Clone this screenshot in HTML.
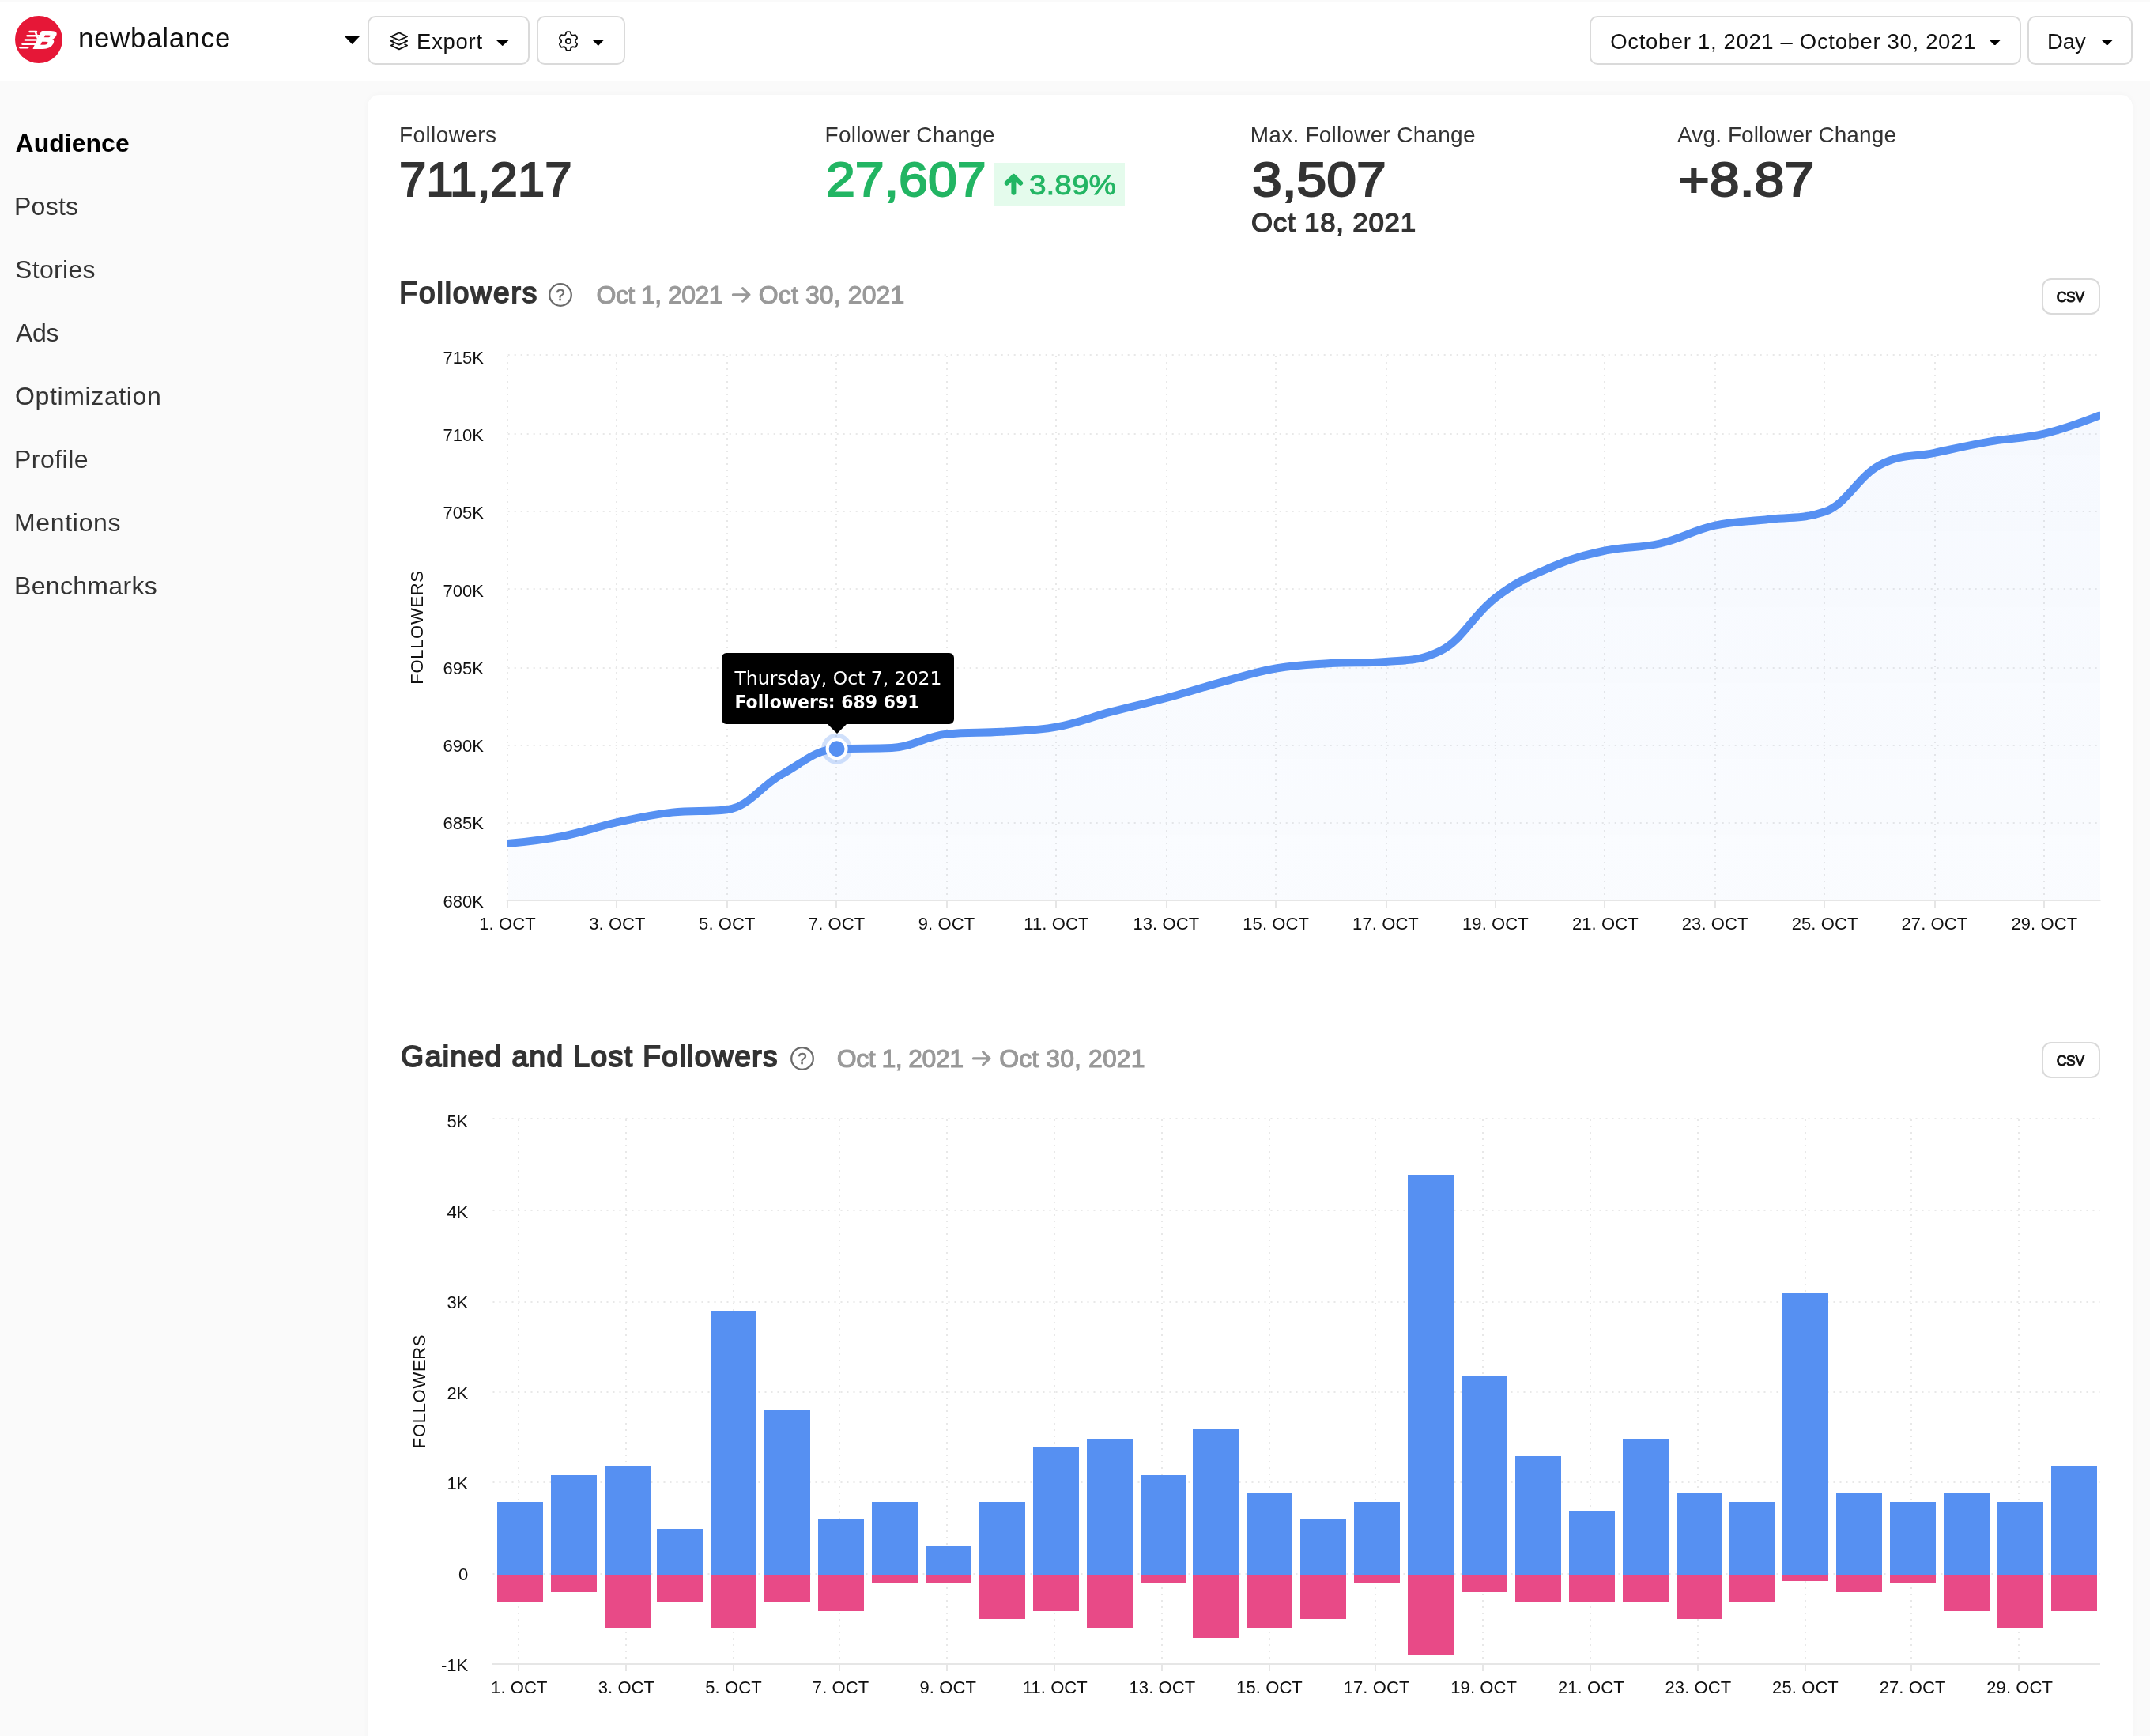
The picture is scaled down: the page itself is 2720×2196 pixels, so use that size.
<!DOCTYPE html>
<html lang="en"><head><meta charset="utf-8"><title>newbalance – Audience</title>
<style>
html,body{margin:0;padding:0}
body{width:2720px;height:2196px;overflow:hidden;background:#fafafa;font-family:"Liberation Sans", Arial, Helvetica, sans-serif;position:relative}
#layer{position:absolute;left:0;top:0;width:2720px;height:2196px;will-change:transform}
.abs{position:absolute}
.t{position:absolute;white-space:nowrap}
.hdr{position:absolute;left:0;top:0;width:2720px;height:102px;background:#fff;box-sizing:border-box;border-top:2px solid #fafafa}
.card{position:absolute;left:465px;top:120px;width:2233px;height:2200px;background:#fff;border-radius:15px;box-shadow:0 0 8px rgba(0,0,0,0.03)}
.btn{position:absolute;box-sizing:border-box;border:2px solid #dadada;border-radius:10px;background:#fff}
svg text.al{font-family:"Liberation Sans", Arial, Helvetica, sans-serif;font-size:22px;fill:#111}
svg text.tt{font-family:"DejaVu Sans", "Liberation Sans", sans-serif;font-size:23.5px;fill:#fff}
svg text.xl{letter-spacing:0.1px}
svg .g{stroke:#e8e8e8;stroke-width:2;stroke-dasharray:2 6}
</style></head><body>
<div class="hdr"></div>
<div class="card"></div>
<div id="layer">

<header>
<svg class="abs" style="left:19px;top:20px" width="60" height="60" viewBox="0 0 60 60">
<circle cx="30" cy="30" r="30" fill="#e61737"/>
<text transform="translate(21.8 40.8) skewX(-26) scale(1.1 1)" font-family='"Liberation Sans", Arial, sans-serif' font-size="30.5" font-weight="bold" fill="#fff" stroke="#fff" stroke-width="2.2" stroke-linejoin="round">B</text>
<g stroke="#fff" stroke-width="2.5" stroke-linecap="round">
<line x1="18.5" y1="19.9" x2="27" y2="19.9"/><line x1="15.5" y1="25.2" x2="34" y2="25.2"/><line x1="12.8" y1="30.5" x2="33" y2="30.5"/><line x1="9.5" y1="35.7" x2="30" y2="35.7"/><line x1="6.5" y1="40.3" x2="16" y2="40.3"/><line x1="26" y1="21" x2="31" y2="34"/>
</g></svg>
<div class="t" style="left:98.90px;top:30px;font-size:35px;line-height:35px;color:#111;letter-spacing:0.651px;">newbalance</div>
<svg class="abs" style="left:435.5px;top:45.8px" width="19" height="10" viewBox="0 0 19 10"><path d="M0 0 H19 L9.5 10 Z" fill="#000"/></svg>
<div class="btn" style="left:465px;top:20px;width:205px;height:62px"></div>
<svg class="abs" style="left:492px;top:39px" width="26" height="26" viewBox="0 0 26 26" fill="none" stroke="#111" stroke-width="1.75" stroke-linejoin="round" stroke-linecap="round">
<path d="M12.9 2.4 L23.1 7.2 L12.9 11.9 L2.7 7.2 Z"/><path d="M5.6 11.5 L2.7 12.9 L12.9 17.6 L23.1 12.9 L20.2 11.5"/><path d="M5.6 17.1 L2.7 18.5 L12.9 23.4 L23.1 18.5 L20.2 17.1"/></svg>
<div class="t" style="left:527.10px;top:39px;font-size:27.5px;line-height:27.5px;color:#111;letter-spacing:0.712px;">Export</div>
<svg class="abs" style="left:627.1px;top:50px" width="17.5" height="8.2" viewBox="0 0 17.5 8.2"><path d="M0 0 H17.5 L8.75 8.2 Z" fill="#000"/></svg>
<div class="btn" style="left:679px;top:20px;width:112px;height:62px"></div>
<svg class="abs" style="left:704.9px;top:37.9px" width="28" height="28" viewBox="0 0 28 28" fill="none" stroke="#111" stroke-width="1.8" stroke-linejoin="round">
<path d="M11.21 3.33 Q11.48 2.16 12.68 2.16 L15.32 2.16 Q16.52 2.16 16.79 3.33 L17.09 4.59 Q17.36 5.76 18.40 6.36 L18.42 6.37 Q19.45 6.97 20.60 6.62 L21.84 6.25 Q22.99 5.90 23.59 6.94 L24.91 9.22 Q25.51 10.26 24.63 11.08 L23.69 11.97 Q22.82 12.79 22.82 13.99 L22.82 14.01 Q22.82 15.21 23.69 16.03 L24.63 16.92 Q25.51 17.74 24.91 18.78 L23.59 21.06 Q22.99 22.10 21.84 21.75 L20.60 21.38 Q19.45 21.03 18.42 21.63 L18.40 21.64 Q17.36 22.24 17.09 23.41 L16.79 24.67 Q16.52 25.84 15.32 25.84 L12.68 25.84 Q11.48 25.84 11.21 24.67 L10.91 23.41 Q10.64 22.24 9.60 21.64 L9.58 21.63 Q8.55 21.03 7.40 21.38 L6.16 21.75 Q5.01 22.10 4.41 21.06 L3.09 18.78 Q2.49 17.74 3.37 16.92 L4.31 16.03 Q5.18 15.21 5.18 14.01 L5.18 13.99 Q5.18 12.79 4.31 11.97 L3.37 11.08 Q2.49 10.26 3.09 9.22 L4.41 6.94 Q5.01 5.90 6.16 6.25 L7.40 6.62 Q8.55 6.97 9.58 6.37 L9.60 6.36 Q10.64 5.76 10.91 4.59 Z"/><circle cx="14" cy="14" r="3.2"/></svg>
<svg class="abs" style="left:749.1px;top:49.9px" width="15.6" height="8" viewBox="0 0 15.6 8"><path d="M0 0 H15.6 L7.8 8 Z" fill="#000"/></svg>
<div class="btn" style="left:2011px;top:20px;width:546px;height:62px"></div>
<div class="t" style="left:2037.20px;top:39px;font-size:27.5px;line-height:27.5px;color:#111;letter-spacing:0.661px;">October 1, 2021 – October 30, 2021</div>
<svg class="abs" style="left:2515.5px;top:49.5px" width="15.5" height="7.8" viewBox="0 0 15.5 7.8"><path d="M0 0 H15.5 L7.75 7.8 Z" fill="#000"/></svg>
<div class="btn" style="left:2565px;top:20px;width:133px;height:62px"></div>
<div class="t" style="left:2590.10px;top:39px;font-size:27.5px;line-height:27.5px;color:#111;letter-spacing:-0.127px;">Day</div>
<svg class="abs" style="left:2657.5px;top:49.5px" width="15.5" height="7.8" viewBox="0 0 15.5 7.8"><path d="M0 0 H15.5 L7.75 7.8 Z" fill="#000"/></svg>
</header>
<nav>
<div class="t" style="left:19.60px;top:165px;font-size:32px;line-height:32px;color:#000;font-weight:bold;letter-spacing:0.009px;">Audience</div>
<div class="t" style="left:18.00px;top:245px;font-size:32px;line-height:32px;color:#333;letter-spacing:0.267px;">Posts</div>
<div class="t" style="left:19.00px;top:325px;font-size:32px;line-height:32px;color:#333;letter-spacing:0.334px;">Stories</div>
<div class="t" style="left:20.00px;top:405px;font-size:32px;line-height:32px;color:#333;letter-spacing:-0.370px;">Ads</div>
<div class="t" style="left:19.00px;top:485px;font-size:32px;line-height:32px;color:#333;letter-spacing:0.632px;">Optimization</div>
<div class="t" style="left:18.00px;top:565px;font-size:32px;line-height:32px;color:#333;letter-spacing:0.466px;">Profile</div>
<div class="t" style="left:18.00px;top:645px;font-size:32px;line-height:32px;color:#333;letter-spacing:0.679px;">Mentions</div>
<div class="t" style="left:18.00px;top:725px;font-size:32px;line-height:32px;color:#333;letter-spacing:0.328px;">Benchmarks</div>
</nav>
<main>
<div class="t" style="left:505.10px;top:157px;font-size:28px;line-height:28px;color:#333;letter-spacing:0.374px;">Followers</div>
<div class="t" style="left:1043.60px;top:157px;font-size:28px;line-height:28px;color:#333;letter-spacing:0.243px;">Follower Change</div>
<div class="t" style="left:1581.80px;top:157px;font-size:28px;line-height:28px;color:#333;letter-spacing:0.239px;">Max. Follower Change</div>
<div class="t" style="left:2122.10px;top:157px;font-size:28px;line-height:28px;color:#333;letter-spacing:0.100px;">Avg. Follower Change</div>
<div class="t" style="left:505.06px;top:197px;font-size:61px;line-height:61px;color:#333;-webkit-text-stroke:2.0px #333;transform:scaleX(1.0117);transform-origin:0 0;">711,217</div>
<div class="t" style="left:1044.84px;top:197px;font-size:61px;line-height:61px;color:#22b563;-webkit-text-stroke:2.0px #22b563;transform:scaleX(1.0861);transform-origin:0 0;">27,607</div>
<div class="t" style="left:1583.88px;top:197px;font-size:61px;line-height:61px;color:#333;-webkit-text-stroke:2.0px #333;transform:scaleX(1.1122);transform-origin:0 0;">3,507</div>
<div class="t" style="left:2123.37px;top:197px;font-size:61px;line-height:61px;color:#333;-webkit-text-stroke:2.0px #333;transform:scaleX(1.1163);transform-origin:0 0;">+8.87</div>
<div class="abs" style="left:1257px;top:206px;width:166px;height:54px;background:#e4fbec"></div>
<div class="t" style="left:1302.31px;top:217px;font-size:35.5px;line-height:35.5px;color:#22b563;-webkit-text-stroke:0.8px #22b563;transform:scaleX(1.0919);transform-origin:0 0;">3.89%</div>
<svg class="abs" style="left:1268px;top:217px" width="30" height="32" viewBox="0 0 30 32" fill="none" stroke="#22b563" stroke-width="6" stroke-linecap="round" stroke-linejoin="round"><path d="M14.4 26.7 V6.2 M5.7 14.7 L14.4 6 L23.1 14.7"/></svg>
<div class="t" style="left:1583.38px;top:266px;font-size:32.5px;line-height:32.5px;color:#333;letter-spacing:0.764px;-webkit-text-stroke:1.3px #333;transform:scaleX(1.0700);transform-origin:0 0;">Oct 18, 2021</div>
<div class="t" style="left:505.35px;top:352px;font-size:37px;line-height:37px;color:#333;letter-spacing:1.961px;-webkit-text-stroke:1.9px #333;">Followers</div>
<svg class="abs" style="left:692px;top:355.6px" width="34" height="34" viewBox="0 0 34 34"><circle cx="17" cy="17" r="13.8" fill="none" stroke="#6b6b6b" stroke-width="2.3"/><text x="17" y="24.2" text-anchor="middle" font-family='"Liberation Sans", Arial, Helvetica, sans-serif' font-size="20.5" fill="#6b6b6b" stroke="#6b6b6b" stroke-width="0.5">?</text></svg>
<div class="t" style="left:754.55px;top:357px;font-size:32px;line-height:32px;color:#999;letter-spacing:-0.534px;-webkit-text-stroke:1.1px #999;">Oct 1, 2021</div>
<svg class="abs" style="left:924.0px;top:361.8px" width="28" height="22" viewBox="0 0 28 22" fill="none" stroke="#999" stroke-width="3.1" stroke-linecap="round" stroke-linejoin="round"><path d="M3.4 10.9 H23.4 M15.6 2.7 L24 10.9 L15.6 19.1"/></svg>
<div class="t" style="left:959.85px;top:357px;font-size:32px;line-height:32px;color:#999;letter-spacing:0.106px;-webkit-text-stroke:1.1px #999;">Oct 30, 2021</div>
<div class="btn" style="left:2583px;top:352px;width:74px;height:46px;border-radius:12px"></div><div class="t" style="left:2601.65px;top:368px;font-size:17.5px;line-height:17.5px;color:#111;letter-spacing:-0.205px;-webkit-text-stroke:0.9px #111;">CSV</div>
<div class="t" style="left:507.35px;top:1318px;font-size:37px;line-height:37px;color:#333;letter-spacing:1.503px;-webkit-text-stroke:1.9px #333;">Gained and Lost Followers</div>
<svg class="abs" style="left:998px;top:1321.6px" width="34" height="34" viewBox="0 0 34 34"><circle cx="17" cy="17" r="13.8" fill="none" stroke="#6b6b6b" stroke-width="2.3"/><text x="17" y="24.2" text-anchor="middle" font-family='"Liberation Sans", Arial, Helvetica, sans-serif' font-size="20.5" fill="#6b6b6b" stroke="#6b6b6b" stroke-width="0.5">?</text></svg>
<div class="t" style="left:1058.85px;top:1323px;font-size:32px;line-height:32px;color:#999;letter-spacing:-0.534px;-webkit-text-stroke:1.1px #999;">Oct 1, 2021</div>
<svg class="abs" style="left:1228.3px;top:1327.8px" width="28" height="22" viewBox="0 0 28 22" fill="none" stroke="#999" stroke-width="3.1" stroke-linecap="round" stroke-linejoin="round"><path d="M3.4 10.9 H23.4 M15.6 2.7 L24 10.9 L15.6 19.1"/></svg>
<div class="t" style="left:1264.15px;top:1323px;font-size:32px;line-height:32px;color:#999;letter-spacing:0.106px;-webkit-text-stroke:1.1px #999;">Oct 30, 2021</div>
<div class="btn" style="left:2583px;top:1318px;width:74px;height:46px;border-radius:12px"></div><div class="t" style="left:2601.65px;top:1334px;font-size:17.5px;line-height:17.5px;color:#111;letter-spacing:-0.205px;-webkit-text-stroke:0.9px #111;">CSV</div>
<svg class="abs" style="left:0;top:0" width="2720" height="2196" viewBox="0 0 2720 2196">
<defs><clipPath id="lc"><rect x="642.0" y="439.0" width="2015.0" height="701.25"/></clipPath><linearGradient id="ag" x1="0" y1="0" x2="0" y2="1" gradientUnits="objectBoundingBox"><stop offset="0" stop-color="#5690f2" stop-opacity="0.055"/><stop offset="1" stop-color="#5690f2" stop-opacity="0.03"/></linearGradient></defs>
<line x1="642.7" x2="2656.5" y1="449" y2="449" class="g"/>
<line x1="642.7" x2="2656.5" y1="549" y2="549" class="g"/>
<line x1="642.7" x2="2656.5" y1="647" y2="647" class="g"/>
<line x1="642.7" x2="2656.5" y1="745" y2="745" class="g"/>
<line x1="642.7" x2="2656.5" y1="845" y2="845" class="g"/>
<line x1="642.7" x2="2656.5" y1="943" y2="943" class="g"/>
<line x1="642.7" x2="2656.5" y1="1041" y2="1041" class="g"/>
<line x1="642" x2="642" y1="450.0" y2="1138.0" class="g"/>
<line x1="780" x2="780" y1="450.0" y2="1138.0" class="g"/>
<line x1="920" x2="920" y1="450.0" y2="1138.0" class="g"/>
<line x1="1058" x2="1058" y1="450.0" y2="1138.0" class="g"/>
<line x1="1198" x2="1198" y1="450.0" y2="1138.0" class="g"/>
<line x1="1336" x2="1336" y1="450.0" y2="1138.0" class="g"/>
<line x1="1476" x2="1476" y1="450.0" y2="1138.0" class="g"/>
<line x1="1614" x2="1614" y1="450.0" y2="1138.0" class="g"/>
<line x1="1754" x2="1754" y1="450.0" y2="1138.0" class="g"/>
<line x1="1892" x2="1892" y1="450.0" y2="1138.0" class="g"/>
<line x1="2030" x2="2030" y1="450.0" y2="1138.0" class="g"/>
<line x1="2170" x2="2170" y1="450.0" y2="1138.0" class="g"/>
<line x1="2308" x2="2308" y1="450.0" y2="1138.0" class="g"/>
<line x1="2448" x2="2448" y1="450.0" y2="1138.0" class="g"/>
<line x1="2586" x2="2586" y1="450.0" y2="1138.0" class="g"/>
<path d="M 642.00 1067.10 C 642.00 1067.10 683.66 1063.18 711.44 1057.80 C 739.22 1052.42 753.10 1046.24 780.88 1040.20 C 808.66 1034.16 822.54 1030.80 850.32 1027.60 C 878.10 1024.40 891.98 1027.60 919.76 1024.20 C 947.54 1020.80 961.42 994.88 989.20 979.50 C 1016.98 964.12 1030.86 948.60 1058.64 947.30 C 1086.42 946.00 1100.30 947.30 1128.08 946.00 C 1155.86 944.70 1169.74 931.50 1197.52 928.60 C 1225.30 925.70 1239.18 927.48 1266.96 925.70 C 1294.74 923.92 1308.62 924.76 1336.40 919.70 C 1364.18 914.64 1378.06 907.74 1405.84 900.40 C 1433.62 893.06 1447.50 890.46 1475.28 883.00 C 1503.06 875.54 1516.94 870.60 1544.72 863.10 C 1572.50 855.60 1586.38 850.30 1614.16 845.50 C 1641.94 840.70 1655.82 840.82 1683.60 839.10 C 1711.38 837.38 1725.26 839.10 1753.04 836.90 C 1780.82 834.70 1794.70 836.90 1822.48 823.30 C 1850.26 809.70 1864.14 777.28 1891.92 756.20 C 1919.70 735.12 1933.58 729.84 1961.36 717.90 C 1989.14 705.96 2003.02 702.58 2030.80 696.50 C 2058.58 690.42 2072.46 693.86 2100.24 687.50 C 2128.02 681.14 2141.90 670.84 2169.68 664.70 C 2197.46 658.56 2211.34 660.28 2239.12 656.80 C 2266.90 653.32 2280.78 656.80 2308.56 647.30 C 2336.34 637.80 2350.22 603.28 2378.00 588.40 C 2405.78 573.52 2419.66 578.86 2447.44 572.90 C 2475.22 566.94 2489.10 563.46 2516.88 558.60 C 2544.66 553.74 2558.54 555.18 2586.32 548.60 C 2614.10 542.02 2655.76 525.70 2655.76 525.70 L 2657.0 525.70 L 2657.0 1138 L 642.70 1138 L 642.70 1067.10 Z" fill="url(#ag)"/>
<line x1="640.7" x2="2657.5" y1="1139" y2="1139" stroke="#e6e6e6" stroke-width="2"/>
<line x1="642" x2="642" y1="1139" y2="1148" stroke="#e6e6e6" stroke-width="2"/>
<line x1="780" x2="780" y1="1139" y2="1148" stroke="#e6e6e6" stroke-width="2"/>
<line x1="920" x2="920" y1="1139" y2="1148" stroke="#e6e6e6" stroke-width="2"/>
<line x1="1058" x2="1058" y1="1139" y2="1148" stroke="#e6e6e6" stroke-width="2"/>
<line x1="1198" x2="1198" y1="1139" y2="1148" stroke="#e6e6e6" stroke-width="2"/>
<line x1="1336" x2="1336" y1="1139" y2="1148" stroke="#e6e6e6" stroke-width="2"/>
<line x1="1476" x2="1476" y1="1139" y2="1148" stroke="#e6e6e6" stroke-width="2"/>
<line x1="1614" x2="1614" y1="1139" y2="1148" stroke="#e6e6e6" stroke-width="2"/>
<line x1="1754" x2="1754" y1="1139" y2="1148" stroke="#e6e6e6" stroke-width="2"/>
<line x1="1892" x2="1892" y1="1139" y2="1148" stroke="#e6e6e6" stroke-width="2"/>
<line x1="2030" x2="2030" y1="1139" y2="1148" stroke="#e6e6e6" stroke-width="2"/>
<line x1="2170" x2="2170" y1="1139" y2="1148" stroke="#e6e6e6" stroke-width="2"/>
<line x1="2308" x2="2308" y1="1139" y2="1148" stroke="#e6e6e6" stroke-width="2"/>
<line x1="2448" x2="2448" y1="1139" y2="1148" stroke="#e6e6e6" stroke-width="2"/>
<line x1="2586" x2="2586" y1="1139" y2="1148" stroke="#e6e6e6" stroke-width="2"/>
<path d="M 642.00 1067.10 C 642.00 1067.10 683.66 1063.18 711.44 1057.80 C 739.22 1052.42 753.10 1046.24 780.88 1040.20 C 808.66 1034.16 822.54 1030.80 850.32 1027.60 C 878.10 1024.40 891.98 1027.60 919.76 1024.20 C 947.54 1020.80 961.42 994.88 989.20 979.50 C 1016.98 964.12 1030.86 948.60 1058.64 947.30 C 1086.42 946.00 1100.30 947.30 1128.08 946.00 C 1155.86 944.70 1169.74 931.50 1197.52 928.60 C 1225.30 925.70 1239.18 927.48 1266.96 925.70 C 1294.74 923.92 1308.62 924.76 1336.40 919.70 C 1364.18 914.64 1378.06 907.74 1405.84 900.40 C 1433.62 893.06 1447.50 890.46 1475.28 883.00 C 1503.06 875.54 1516.94 870.60 1544.72 863.10 C 1572.50 855.60 1586.38 850.30 1614.16 845.50 C 1641.94 840.70 1655.82 840.82 1683.60 839.10 C 1711.38 837.38 1725.26 839.10 1753.04 836.90 C 1780.82 834.70 1794.70 836.90 1822.48 823.30 C 1850.26 809.70 1864.14 777.28 1891.92 756.20 C 1919.70 735.12 1933.58 729.84 1961.36 717.90 C 1989.14 705.96 2003.02 702.58 2030.80 696.50 C 2058.58 690.42 2072.46 693.86 2100.24 687.50 C 2128.02 681.14 2141.90 670.84 2169.68 664.70 C 2197.46 658.56 2211.34 660.28 2239.12 656.80 C 2266.90 653.32 2280.78 656.80 2308.56 647.30 C 2336.34 637.80 2350.22 603.28 2378.00 588.40 C 2405.78 573.52 2419.66 578.86 2447.44 572.90 C 2475.22 566.94 2489.10 563.46 2516.88 558.60 C 2544.66 553.74 2558.54 555.18 2586.32 548.60 C 2614.10 542.02 2655.76 525.70 2655.76 525.70" fill="none" stroke="#5690f2" stroke-width="10" stroke-linejoin="round" stroke-linecap="round" clip-path="url(#lc)"/>
<text x="612" y="459.8" text-anchor="end" class="al">715K</text>
<text x="612" y="558.1" text-anchor="end" class="al">710K</text>
<text x="612" y="656.3" text-anchor="end" class="al">705K</text>
<text x="612" y="754.6" text-anchor="end" class="al">700K</text>
<text x="612" y="852.9" text-anchor="end" class="al">695K</text>
<text x="612" y="951.1" text-anchor="end" class="al">690K</text>
<text x="612" y="1049.4" text-anchor="end" class="al">685K</text>
<text x="612" y="1147.7" text-anchor="end" class="al">680K</text>
<text x="642.0" y="1176" text-anchor="middle" class="al xl">1. OCT</text>
<text x="780.9" y="1176" text-anchor="middle" class="al xl">3. OCT</text>
<text x="919.8" y="1176" text-anchor="middle" class="al xl">5. OCT</text>
<text x="1058.6" y="1176" text-anchor="middle" class="al xl">7. OCT</text>
<text x="1197.5" y="1176" text-anchor="middle" class="al xl">9. OCT</text>
<text x="1336.4" y="1176" text-anchor="middle" class="al xl">11. OCT</text>
<text x="1475.3" y="1176" text-anchor="middle" class="al xl">13. OCT</text>
<text x="1614.2" y="1176" text-anchor="middle" class="al xl">15. OCT</text>
<text x="1753.0" y="1176" text-anchor="middle" class="al xl">17. OCT</text>
<text x="1891.9" y="1176" text-anchor="middle" class="al xl">19. OCT</text>
<text x="2030.8" y="1176" text-anchor="middle" class="al xl">21. OCT</text>
<text x="2169.7" y="1176" text-anchor="middle" class="al xl">23. OCT</text>
<text x="2308.6" y="1176" text-anchor="middle" class="al xl">25. OCT</text>
<text x="2447.4" y="1176" text-anchor="middle" class="al xl">27. OCT</text>
<text x="2586.3" y="1176" text-anchor="middle" class="al xl">29. OCT</text>
<text transform="translate(535 793.5) rotate(-90)" text-anchor="middle" class="al" letter-spacing="0.7">FOLLOWERS</text>
<circle cx="1058.6" cy="947.3" r="19.5" fill="#5690f2" fill-opacity="0.28"/>
<circle cx="1058.6" cy="947.3" r="12" fill="#5690f2" stroke="#fff" stroke-width="4"/>
<path d="M919 826 H1201 a6 6 0 0 1 6 6 V910 a6 6 0 0 1 -6 6 H1071 L1059 928 L1047 916 H919 a6 6 0 0 1 -6 -6 V832 a6 6 0 0 1 6 -6 Z" fill="#000"/>
<text x="929.5" y="866" class="tt">Thursday, Oct 7, 2021</text>
<text x="929.5" y="896" class="tt" font-weight="bold" textLength="234" lengthAdjust="spacingAndGlyphs">Followers: 689 691</text>
<line x1="623.5" x2="2656.5" y1="1415" y2="1415" class="g"/>
<line x1="623.5" x2="2656.5" y1="1531" y2="1531" class="g"/>
<line x1="623.5" x2="2656.5" y1="1647" y2="1647" class="g"/>
<line x1="623.5" x2="2656.5" y1="1761" y2="1761" class="g"/>
<line x1="623.5" x2="2656.5" y1="1875" y2="1875" class="g"/>
<line x1="623.5" x2="2656.5" y1="1991" y2="1991" class="g"/>
<line x1="656" x2="656" y1="1416" y2="2104.0" class="g"/>
<line x1="792" x2="792" y1="1416" y2="2104.0" class="g"/>
<line x1="928" x2="928" y1="1416" y2="2104.0" class="g"/>
<line x1="1062" x2="1062" y1="1416" y2="2104.0" class="g"/>
<line x1="1198" x2="1198" y1="1416" y2="2104.0" class="g"/>
<line x1="1334" x2="1334" y1="1416" y2="2104.0" class="g"/>
<line x1="1470" x2="1470" y1="1416" y2="2104.0" class="g"/>
<line x1="1606" x2="1606" y1="1416" y2="2104.0" class="g"/>
<line x1="1740" x2="1740" y1="1416" y2="2104.0" class="g"/>
<line x1="1876" x2="1876" y1="1416" y2="2104.0" class="g"/>
<line x1="2012" x2="2012" y1="1416" y2="2104.0" class="g"/>
<line x1="2148" x2="2148" y1="1416" y2="2104.0" class="g"/>
<line x1="2284" x2="2284" y1="1416" y2="2104.0" class="g"/>
<line x1="2418" x2="2418" y1="1416" y2="2104.0" class="g"/>
<line x1="2554" x2="2554" y1="1416" y2="2104.0" class="g"/>
<line x1="623.0" x2="2657.0" y1="2105.0" y2="2105.0" stroke="#e6e6e6" stroke-width="2"/>
<line x1="656" x2="656" y1="2105.0" y2="2114.0" stroke="#e6e6e6" stroke-width="2"/>
<line x1="792" x2="792" y1="2105.0" y2="2114.0" stroke="#e6e6e6" stroke-width="2"/>
<line x1="928" x2="928" y1="2105.0" y2="2114.0" stroke="#e6e6e6" stroke-width="2"/>
<line x1="1062" x2="1062" y1="2105.0" y2="2114.0" stroke="#e6e6e6" stroke-width="2"/>
<line x1="1198" x2="1198" y1="2105.0" y2="2114.0" stroke="#e6e6e6" stroke-width="2"/>
<line x1="1334" x2="1334" y1="2105.0" y2="2114.0" stroke="#e6e6e6" stroke-width="2"/>
<line x1="1470" x2="1470" y1="2105.0" y2="2114.0" stroke="#e6e6e6" stroke-width="2"/>
<line x1="1606" x2="1606" y1="2105.0" y2="2114.0" stroke="#e6e6e6" stroke-width="2"/>
<line x1="1740" x2="1740" y1="2105.0" y2="2114.0" stroke="#e6e6e6" stroke-width="2"/>
<line x1="1876" x2="1876" y1="2105.0" y2="2114.0" stroke="#e6e6e6" stroke-width="2"/>
<line x1="2012" x2="2012" y1="2105.0" y2="2114.0" stroke="#e6e6e6" stroke-width="2"/>
<line x1="2148" x2="2148" y1="2105.0" y2="2114.0" stroke="#e6e6e6" stroke-width="2"/>
<line x1="2284" x2="2284" y1="2105.0" y2="2114.0" stroke="#e6e6e6" stroke-width="2"/>
<line x1="2418" x2="2418" y1="2105.0" y2="2114.0" stroke="#e6e6e6" stroke-width="2"/>
<line x1="2554" x2="2554" y1="2105.0" y2="2114.0" stroke="#e6e6e6" stroke-width="2"/>
<rect x="629" y="1900" width="58" height="92" fill="#5690f2"/>
<rect x="629" y="1992" width="58" height="34" fill="#e84a87"/>
<rect x="697" y="1866" width="58" height="126" fill="#5690f2"/>
<rect x="697" y="1992" width="58" height="22" fill="#e84a87"/>
<rect x="765" y="1854" width="58" height="138" fill="#5690f2"/>
<rect x="765" y="1992" width="58" height="68" fill="#e84a87"/>
<rect x="831" y="1934" width="58" height="58" fill="#5690f2"/>
<rect x="831" y="1992" width="58" height="34" fill="#e84a87"/>
<rect x="899" y="1658" width="58" height="334" fill="#5690f2"/>
<rect x="899" y="1992" width="58" height="68" fill="#e84a87"/>
<rect x="967" y="1784" width="58" height="208" fill="#5690f2"/>
<rect x="967" y="1992" width="58" height="34" fill="#e84a87"/>
<rect x="1035" y="1922" width="58" height="70" fill="#5690f2"/>
<rect x="1035" y="1992" width="58" height="46" fill="#e84a87"/>
<rect x="1103" y="1900" width="58" height="92" fill="#5690f2"/>
<rect x="1103" y="1992" width="58" height="10" fill="#e84a87"/>
<rect x="1171" y="1956" width="58" height="36" fill="#5690f2"/>
<rect x="1171" y="1992" width="58" height="10" fill="#e84a87"/>
<rect x="1239" y="1900" width="58" height="92" fill="#5690f2"/>
<rect x="1239" y="1992" width="58" height="56" fill="#e84a87"/>
<rect x="1307" y="1830" width="58" height="162" fill="#5690f2"/>
<rect x="1307" y="1992" width="58" height="46" fill="#e84a87"/>
<rect x="1375" y="1820" width="58" height="172" fill="#5690f2"/>
<rect x="1375" y="1992" width="58" height="68" fill="#e84a87"/>
<rect x="1443" y="1866" width="58" height="126" fill="#5690f2"/>
<rect x="1443" y="1992" width="58" height="10" fill="#e84a87"/>
<rect x="1509" y="1808" width="58" height="184" fill="#5690f2"/>
<rect x="1509" y="1992" width="58" height="80" fill="#e84a87"/>
<rect x="1577" y="1888" width="58" height="104" fill="#5690f2"/>
<rect x="1577" y="1992" width="58" height="68" fill="#e84a87"/>
<rect x="1645" y="1922" width="58" height="70" fill="#5690f2"/>
<rect x="1645" y="1992" width="58" height="56" fill="#e84a87"/>
<rect x="1713" y="1900" width="58" height="92" fill="#5690f2"/>
<rect x="1713" y="1992" width="58" height="10" fill="#e84a87"/>
<rect x="1781" y="1486" width="58" height="506" fill="#5690f2"/>
<rect x="1781" y="1992" width="58" height="102" fill="#e84a87"/>
<rect x="1849" y="1740" width="58" height="252" fill="#5690f2"/>
<rect x="1849" y="1992" width="58" height="22" fill="#e84a87"/>
<rect x="1917" y="1842" width="58" height="150" fill="#5690f2"/>
<rect x="1917" y="1992" width="58" height="34" fill="#e84a87"/>
<rect x="1985" y="1912" width="58" height="80" fill="#5690f2"/>
<rect x="1985" y="1992" width="58" height="34" fill="#e84a87"/>
<rect x="2053" y="1820" width="58" height="172" fill="#5690f2"/>
<rect x="2053" y="1992" width="58" height="34" fill="#e84a87"/>
<rect x="2121" y="1888" width="58" height="104" fill="#5690f2"/>
<rect x="2121" y="1992" width="58" height="56" fill="#e84a87"/>
<rect x="2187" y="1900" width="58" height="92" fill="#5690f2"/>
<rect x="2187" y="1992" width="58" height="34" fill="#e84a87"/>
<rect x="2255" y="1636" width="58" height="356" fill="#5690f2"/>
<rect x="2255" y="1992" width="58" height="8" fill="#e84a87"/>
<rect x="2323" y="1888" width="58" height="104" fill="#5690f2"/>
<rect x="2323" y="1992" width="58" height="22" fill="#e84a87"/>
<rect x="2391" y="1900" width="58" height="92" fill="#5690f2"/>
<rect x="2391" y="1992" width="58" height="10" fill="#e84a87"/>
<rect x="2459" y="1888" width="58" height="104" fill="#5690f2"/>
<rect x="2459" y="1992" width="58" height="46" fill="#e84a87"/>
<rect x="2527" y="1900" width="58" height="92" fill="#5690f2"/>
<rect x="2527" y="1992" width="58" height="68" fill="#e84a87"/>
<rect x="2595" y="1854" width="58" height="138" fill="#5690f2"/>
<rect x="2595" y="1992" width="58" height="46" fill="#e84a87"/>
<text x="592.3" y="1425.9" text-anchor="end" class="al">5K</text>
<text x="592.3" y="1540.5" text-anchor="end" class="al">4K</text>
<text x="592.3" y="1655.1" text-anchor="end" class="al">3K</text>
<text x="592.3" y="1769.7" text-anchor="end" class="al">2K</text>
<text x="592.3" y="1884.3" text-anchor="end" class="al">1K</text>
<text x="592.3" y="1998.9" text-anchor="end" class="al">0</text>
<text x="592.3" y="2113.5" text-anchor="end" class="al">-1K</text>
<text x="656.8" y="2142" text-anchor="middle" class="al xl">1. OCT</text>
<text x="792.4" y="2142" text-anchor="middle" class="al xl">3. OCT</text>
<text x="928.0" y="2142" text-anchor="middle" class="al xl">5. OCT</text>
<text x="1063.6" y="2142" text-anchor="middle" class="al xl">7. OCT</text>
<text x="1199.2" y="2142" text-anchor="middle" class="al xl">9. OCT</text>
<text x="1334.8" y="2142" text-anchor="middle" class="al xl">11. OCT</text>
<text x="1470.4" y="2142" text-anchor="middle" class="al xl">13. OCT</text>
<text x="1606.0" y="2142" text-anchor="middle" class="al xl">15. OCT</text>
<text x="1741.6" y="2142" text-anchor="middle" class="al xl">17. OCT</text>
<text x="1877.2" y="2142" text-anchor="middle" class="al xl">19. OCT</text>
<text x="2012.8" y="2142" text-anchor="middle" class="al xl">21. OCT</text>
<text x="2148.4" y="2142" text-anchor="middle" class="al xl">23. OCT</text>
<text x="2284.0" y="2142" text-anchor="middle" class="al xl">25. OCT</text>
<text x="2419.6" y="2142" text-anchor="middle" class="al xl">27. OCT</text>
<text x="2555.2" y="2142" text-anchor="middle" class="al xl">29. OCT</text>
<text transform="translate(537.5 1760) rotate(-90)" text-anchor="middle" class="al" letter-spacing="0.7">FOLLOWERS</text>
</svg>
</main></div></body></html>
